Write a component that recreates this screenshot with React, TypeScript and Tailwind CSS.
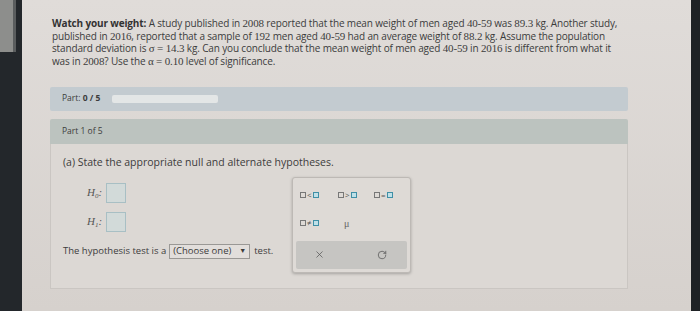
import { X, RotateCcw } from "lucide-react";

const serif = { fontFamily: '"Liberation Serif", serif' } as const;

function Num({ children }: { children: React.ReactNode }) {
  return <span className="font-['Liberation_Serif',serif] text-[11px]">{children}</span>;
}

function Line({ children }: { children: React.ReactNode }) {
  return <div className="h-[12.7px] leading-[12.7px] overflow-visible">{children}</div>;
}

function Sq({ blue }: { blue?: boolean }) {
  return (
    <span
      className={
        "inline-block w-[6px] h-[6px] border align-middle " +
        (blue ? "border-[#3f8fa6] bg-[#bfe0e8]" : "border-[#777]")
      }
    />
  );
}

function AnswerBox() {
  return <span className="inline-block w-[20px] h-[20px] border border-[#a8bfc4] bg-[#d2dad9]" />;
}

function Palette() {
  return (
    <div className="w-[119px] h-[96px] mt-[2px] rounded-[3px] border border-[#bdb9b5] bg-[#dedad6] shadow-[0_1px_3px_rgba(0,0,0,0.25)] flex flex-col overflow-hidden">
      <div className="flex flex-col gap-[15px] pt-[11px] pl-[7px] text-[8px] text-[#555]">
        <div className="flex items-center">
          <span className="flex items-center gap-[1px] w-[38px]">
            <Sq />&lt;<Sq blue />
          </span>
          <span className="flex items-center gap-[1px] w-[36px]">
            <Sq />&gt;<Sq blue />
          </span>
          <span className="flex items-center gap-[1px]">
            <Sq />=<Sq blue />
          </span>
        </div>
        <div className="flex items-center">
          <span className="flex items-center gap-[1px] w-[44px]">
            <Sq />≠<Sq blue />
          </span>
          <span className="text-[10px] text-[#666]" style={serif}>μ</span>
        </div>
      </div>
      <div className="mt-auto mb-[3px] mx-[3px] h-[28px] bg-[#c6c5c2] rounded-[2px] flex items-center justify-around">
        <X size={11} strokeWidth={1.6} className="text-[#555] ml-[-8px]" />
        <RotateCcw size={10} strokeWidth={1.8} className="text-[#555] mr-[-6px] scale-x-[-1]" />
      </div>
    </div>
  );
}

export default function App() {
  return (
    <div className="w-[700px] h-[311px] flex overflow-hidden bg-[#202428]">
      <div className="w-[22px] h-full flex flex-col bg-[#23272b]">
        <div className="w-[16px] h-[52px] bg-[#8d8e8c] border-r-[3px] border-[#5a5d5e]" />
      </div>
      <div className="flex-1 h-full bg-gradient-to-b from-[#e0dcd9] to-[#d6d1cd] font-['Open_Sans',sans-serif] text-[#3c3c3c] pt-[17px]">
        <div className="pl-[30px] text-[10px] tracking-[-0.15px] whitespace-nowrap">
          <Line>
            <b className="text-[#333]">Watch your weight:</b> A study published in <Num>2008</Num> reported
            that the mean weight of men aged <Num>40-59</Num> was <Num>89.3</Num> kg. Another study,
          </Line>
          <Line>
            published in <Num>2016</Num>, reported that a sample of <Num>192</Num> men aged{" "}
            <Num>40-59</Num> had an average weight of <Num>88.2</Num> kg. Assume the population
          </Line>
          <Line>
            standard deviation is <Num>σ = 14.3</Num> kg. Can you conclude that the mean weight of men
            aged <Num>40-59</Num> in <Num>2016</Num> is different from what it
          </Line>
          <Line>
            was in <Num>2008</Num>? Use the <Num>α = 0.10</Num> level of significance.
          </Line>
        </div>

        <div className="ml-[28px] w-[578px] mt-[19px]">
          <div className="h-[24px] bg-[#c3cbd0] rounded-[2px] flex items-center pl-[12px] text-[8.5px]">
            <span>
              Part: <b>0 / 5</b>
            </span>
            <span className="ml-[12px] w-[106px] h-[8px] rounded-[2px] bg-[#e3e6e6]" />
          </div>
          <div className="mt-[8px] h-[25px] bg-[#bcc3bf] rounded-t-[2px] flex items-center pl-[12px] text-[8.5px]">
            Part 1 of 5
          </div>
          <div className="h-[145px] border border-t-0 border-[#cac6c2] bg-[#dcd8d4] pt-[11px] text-[9.5px]">
            <div className="pl-[12px] text-[10.5px] leading-[14px]">
              (a) State the appropriate null and alternate hypotheses.
            </div>
            <div className="flex mt-[6px]">
              <div className="w-[241px]">
                <div className="flex flex-col gap-[9px] pl-[36px] pt-[8px]">
                  <div className="flex items-center gap-[4px]">
                    <span className="w-[15px] text-[11px] italic text-[#555] leading-none" style={serif}>
                      H<sub className="text-[7px]">0</sub>:
                    </span>
                    <AnswerBox />
                  </div>
                  <div className="flex items-center gap-[4px]">
                    <span className="w-[15px] text-[11px] italic text-[#555] leading-none" style={serif}>
                      H<sub className="text-[7px]">1</sub>:
                    </span>
                    <AnswerBox />
                  </div>
                </div>
                <div className="flex items-center pl-[12px] mt-[12px] whitespace-nowrap">
                  The hypothesis test is a
                  <span className="ml-[3px] flex items-center gap-[8px] h-[15px] px-[3px] border border-[#9a9895] bg-[#e2dedb]">
                    (Choose one)
                    <span className="text-[7px]">▼</span>
                  </span>
                  <span className="ml-[4px]">test.</span>
                </div>
              </div>
              <Palette />
            </div>
          </div>
        </div>
      </div>
      <div className="w-[9px] h-full bg-[#1e2225]" />
    </div>
  );
}
